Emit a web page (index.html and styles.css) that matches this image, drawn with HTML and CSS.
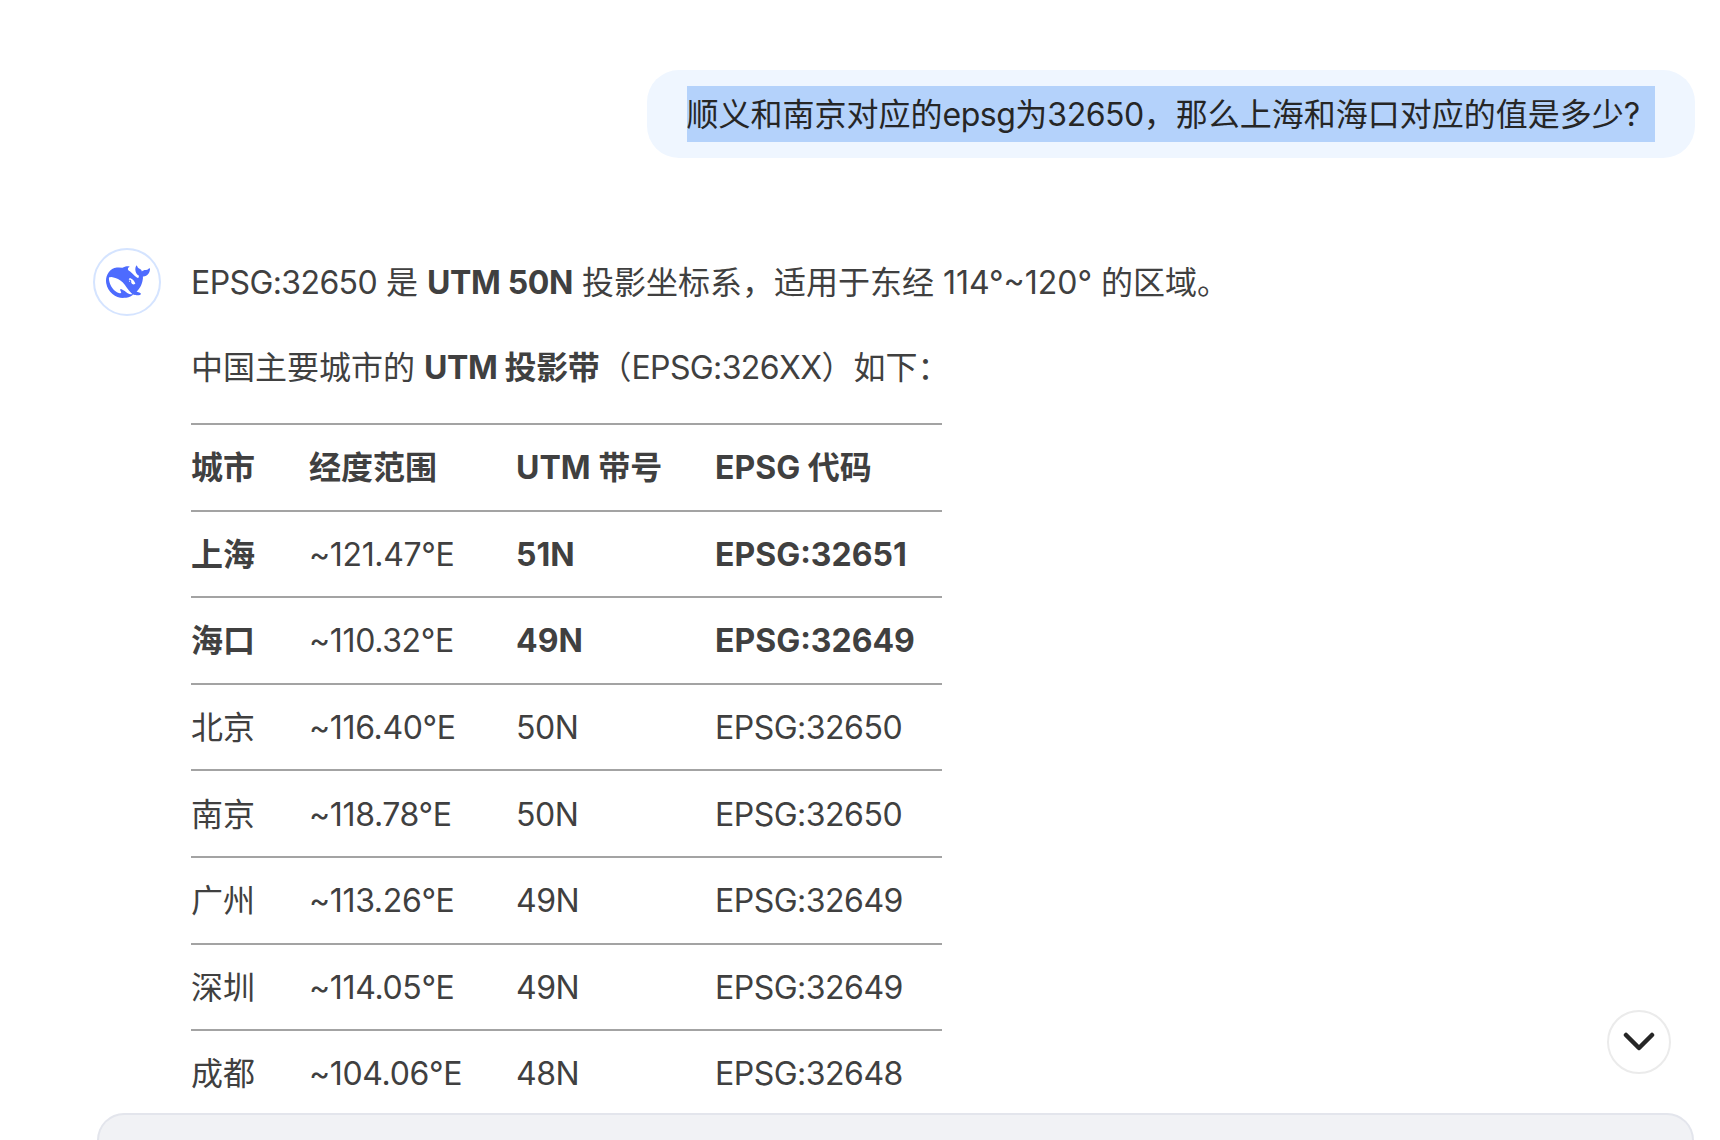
FILE: index.html
```html
<!DOCTYPE html>
<html lang="zh">
<head>
    <meta charset="UTF-8">
    <meta name="viewport" content="width=device-width, initial-scale=1.0">
    <title>DeepSeek</title>
    <link rel="stylesheet" href="styles.css">
</head>
<body>
    <div class="chat">
        <div class="user-row">
            <div class="user-bubble"><span class="selected-text">顺义和南京对应的<span class="latin">epsg</span>为<span class="latin">32650</span>，那么上海和海口对应的值是多少?</span></div>
        </div>
        <div class="answer">
            <div class="avatar">
                <svg class="whale" viewBox="0 0 24 24" aria-hidden="true">
                    <path d="M23.748 4.482c-.254-.124-.364.113-.512.234-.051.039-.094.09-.137.136-.372.397-.806.657-1.373.626-.829-.046-1.537.214-2.163.848-.133-.782-.575-1.248-1.247-1.548-.352-.156-.708-.311-.955-.65-.172-.241-.219-.51-.305-.774-.055-.16-.11-.323-.293-.35-.2-.031-.278.136-.356.276-.313.572-.434 1.202-.422 1.84.027 1.436.633 2.58 1.838 3.393.137.093.172.187.129.323-.082.28-.18.552-.266.833-.055.179-.137.217-.329.14a5.526 5.526 0 01-1.736-1.18c-.857-.828-1.631-1.742-2.597-2.458a11.365 11.365 0 00-.689-.471c-.985-.957.13-1.743.388-1.836.27-.098.093-.432-.779-.428-.872.004-1.67.295-2.687.684a3.055 3.055 0 01-.465.137 9.597 9.597 0 00-2.883-.102c-1.885.21-3.39 1.102-4.497 2.623C.082 8.606-.231 10.684.152 12.85c.403 2.284 1.569 4.175 3.36 5.653 1.858 1.533 3.997 2.284 6.438 2.14 1.482-.085 3.133-.284 4.994-1.86.47.234.962.327 1.78.397.63.059 1.236-.03 1.705-.128.735-.156.684-.837.419-.961-2.155-1.004-1.682-.595-2.113-.926 1.096-1.296 2.746-2.642 3.392-7.003.05-.347.007-.565 0-.845-.004-.17.035-.237.23-.256a4.173 4.173 0 001.545-.475c1.396-.763 1.96-2.015 2.093-3.517.02-.23-.004-.467-.247-.588zM11.581 18c-2.089-1.642-3.102-2.183-3.52-2.16-.392.024-.321.471-.235.763.09.288.207.486.371.739.114.167.192.416-.113.603-.673.416-1.842-.14-1.897-.167-1.361-.802-2.5-1.86-3.301-3.307-.774-1.393-1.224-2.887-1.298-4.482-.02-.386.093-.522.477-.592a4.696 4.696 0 011.529-.039c2.132.312 3.946 1.265 5.468 2.774.868.86 1.525 1.887 2.202 2.891.72 1.066 1.494 2.082 2.48 2.914.348.292.625.514.891.677-.802.09-2.14.11-3.054-.614zm1-6.44a.306.306 0 01.415-.287.302.302 0 01.2.288.306.306 0 01-.31.307.303.303 0 01-.304-.308zm3.11 1.596c-.2.081-.399.151-.59.16a1.245 1.245 0 01-.798-.254c-.274-.23-.47-.358-.552-.758a1.73 1.73 0 01.016-.588c.07-.327-.008-.537-.239-.727-.187-.156-.426-.199-.688-.199a.559.559 0 01-.254-.078c-.11-.054-.2-.19-.114-.358.028-.054.16-.186.192-.21.356-.202.767-.136 1.146.016.352.144.618.408 1.001.782.391.451.462.576.685.914.176.265.336.537.445.848.067.195-.019.354-.25.452z"/>
                </svg>
            </div>
            <div class="markdown">
                <p><span class="code-name">EPSG:32650</span> 是 <strong>UTM 50N</strong> 投影坐标系，适用于东经 114°~120° 的区域。</p>
                <p>中国主要城市的 <strong>UTM 投影带</strong>（<span class="code-name">EPSG:326XX</span>）如下：</p>
                <table class="zones">
                    <colgroup>
                        <col class="col-city">
                        <col class="col-range">
                        <col class="col-zone">
                        <col class="col-code">
                    </colgroup>
                    <thead>
                        <tr><th>城市</th><th>经度范围</th><th>UTM 带号</th><th>EPSG 代码</th></tr>
                    </thead>
                    <tbody>
                        <tr><td><strong>上海</strong></td><td class="range">~121.47°E</td><td class="latin"><strong>51N</strong></td><td class="latin"><strong>EPSG:32651</strong></td></tr>
                        <tr><td><strong>海口</strong></td><td class="range">~110.32°E</td><td class="latin"><strong>49N</strong></td><td class="latin"><strong>EPSG:32649</strong></td></tr>
                        <tr><td>北京</td><td class="range">~116.40°E</td><td class="latin">50N</td><td class="latin">EPSG:32650</td></tr>
                        <tr><td>南京</td><td class="range">~118.78°E</td><td class="latin">50N</td><td class="latin">EPSG:32650</td></tr>
                        <tr><td>广州</td><td class="range">~113.26°E</td><td class="latin">49N</td><td class="latin">EPSG:32649</td></tr>
                        <tr><td>深圳</td><td class="range">~114.05°E</td><td class="latin">49N</td><td class="latin">EPSG:32649</td></tr>
                        <tr><td>成都</td><td class="range">~104.06°E</td><td class="latin">48N</td><td class="latin">EPSG:32648</td></tr>
                    </tbody>
                </table>
            </div>
        </div>
        <button class="scroll-down" aria-label="scroll to bottom">
            <svg viewBox="0 0 32 20" class="chevron" aria-hidden="true">
                <path d="M3 3l13 13L29 3"/>
            </svg>
        </button>
    </div>
    <div class="composer"></div>
</body>
</html>
```

FILE: styles.css
```css
html, body {
    height: 100%;
}
body {
    margin: 0;
    display: flex;
    flex-direction: column;
    overflow: hidden;
    background-color: #fff;
    font-family: Inter, "Noto Sans CJK SC", sans-serif;
    font-size: 32px;
    line-height: 56px;
    color: #404040;
}
.latin {
    letter-spacing: -0.5px;
}
.range {
    letter-spacing: -0.35px;
}
.code-name {
    letter-spacing: -0.6px;
}
.chat {
    position: relative;
    flex: 1;
    min-height: 0;
    overflow: hidden;
    padding-top: 70px;
}
.user-row {
    display: flex;
    justify-content: flex-end;
    padding-right: 25px;
}
.user-bubble {
    padding: 16px 40px;
    border-radius: 32px;
    background-color: #eff6ff;
    color: #262626;
}
.selected-text {
    display: block;
    height: 55px;
    padding: 1px 15px 0 0;
    background-color: #b4d2fb;
}
.answer {
    display: flex;
    margin-top: 97px;
    padding-left: 93px;
}
.avatar {
    box-sizing: border-box;
    width: 68px;
    height: 68px;
    flex-shrink: 0;
    margin-top: -7px;
    margin-right: 30px;
    display: flex;
    align-items: center;
    justify-content: center;
    border: 2px solid #d5e4ff;
    border-radius: 50%;
}
.whale {
    width: 44px;
    height: 44px;
    margin-left: 2px;
    fill: #4d6bfe;
}
.markdown p {
    margin: 0 0 29px;
}
.markdown p strong {
    letter-spacing: -0.4px;
}
.zones {
    width: 751px;
    margin-top: -2px;
    border-collapse: collapse;
    table-layout: fixed;
    border-top: 2px solid #a3a3a3;
}
.col-city {
    width: 118px;
}
.col-range {
    width: 207px;
}
.col-zone {
    width: 199px;
}
.zones th, .zones td {
    padding: 15.3px 0 13.3px;
    text-align: left;
    border-bottom: 2px solid #a3a3a3;
    white-space: nowrap;
}
.zones th, .zones strong {
    font-weight: 700;
    letter-spacing: 0;
}
.scroll-down {
    position: absolute;
    left: 1607px;
    top: 1010px;
    box-sizing: border-box;
    width: 64px;
    height: 64px;
    padding: 0;
    display: flex;
    align-items: center;
    justify-content: center;
    border: 2px solid #ebebeb;
    border-radius: 50%;
    background-color: #fff;
}
.chevron {
    width: 32px;
    height: 20px;
    fill: none;
    stroke: #262626;
    stroke-width: 4.5;
    stroke-linecap: round;
    stroke-linejoin: round;
}
.composer {
    box-sizing: border-box;
    flex: 0 0 27px;
    margin: 0 26px 0 97px;
    border: 2px solid #e3e5ec;
    border-bottom: none;
    border-radius: 56px 56px 0 0;
    background-color: #f1f2f5;
}
```
